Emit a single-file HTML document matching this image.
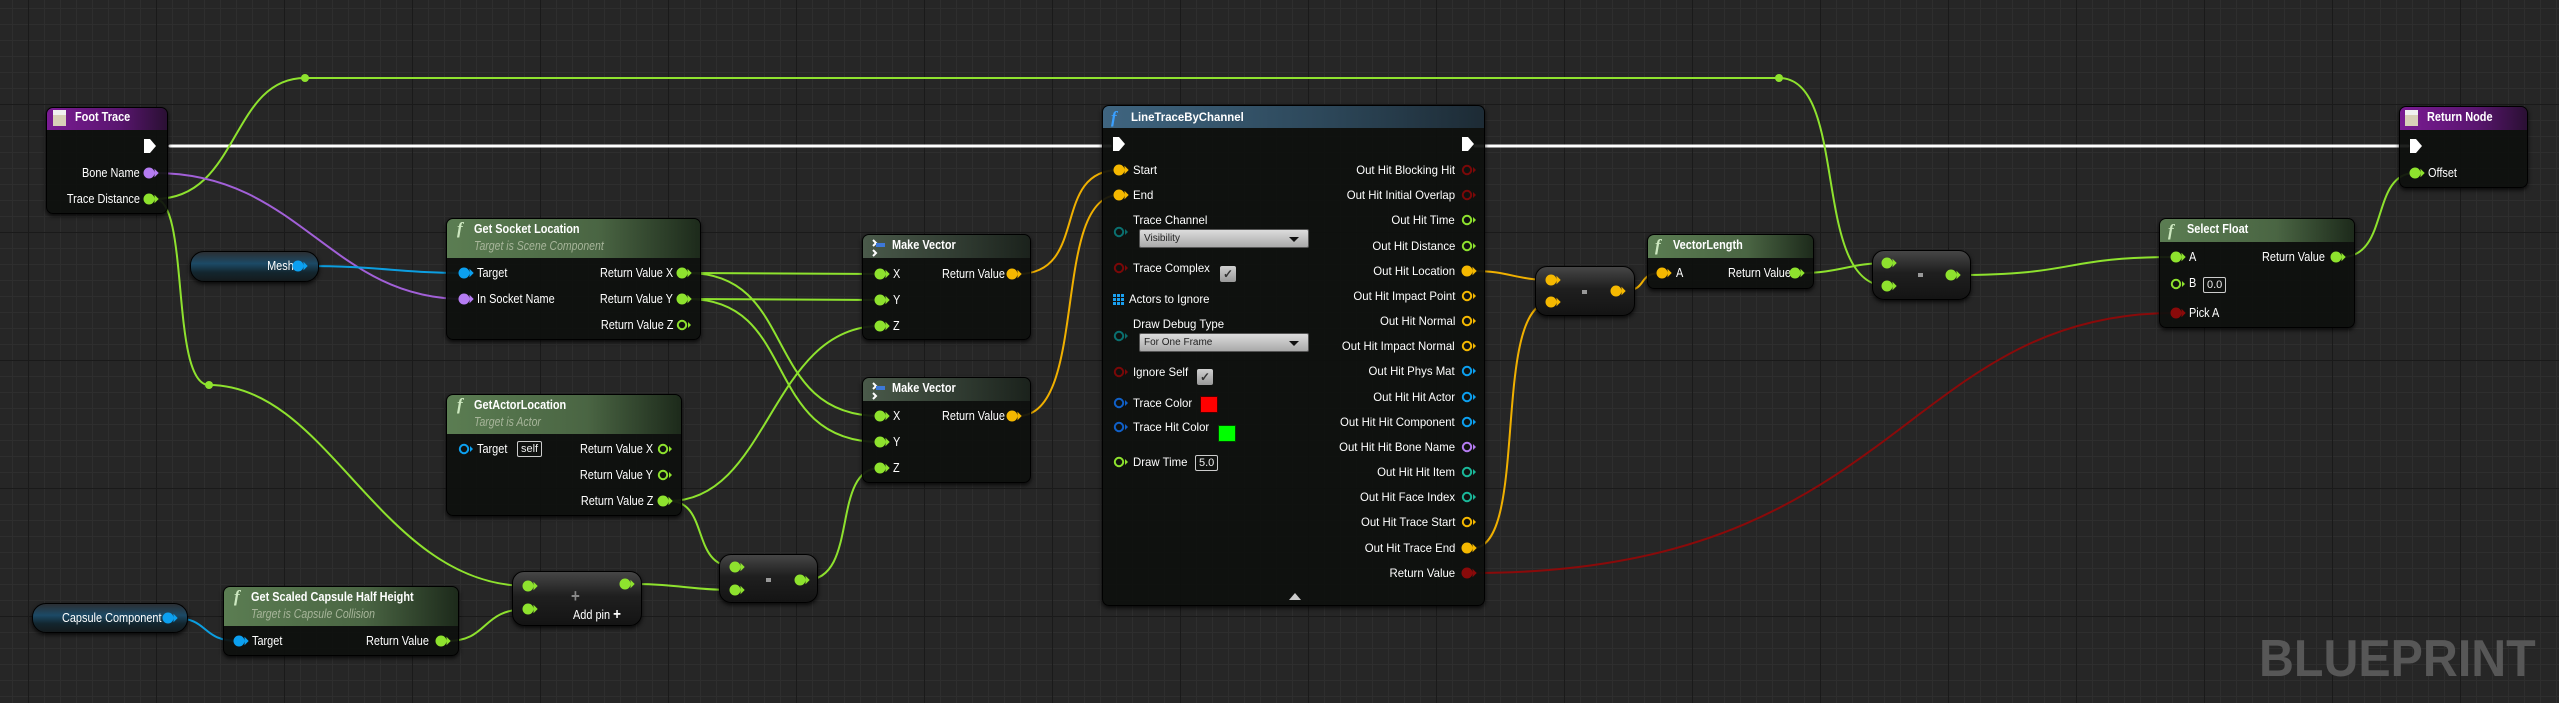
<!DOCTYPE html>
<html><head><meta charset="utf-8"><style>
*{margin:0;padding:0;box-sizing:border-box}
body{width:2559px;height:703px;overflow:hidden;position:relative;background-color:#262626;
background-image:
linear-gradient(to right,#1a1a1a 1px,transparent 1px),
linear-gradient(to bottom,#1a1a1a 1px,transparent 1px),
linear-gradient(to right,#2e2e2e 1px,transparent 1px),
linear-gradient(to bottom,#2e2e2e 1px,transparent 1px);
background-size:128px 128px,128px 128px,16px 16px,16px 16px;
background-position:28px 104px,28px 104px,12px 8px,12px 8px;
font-family:"Liberation Sans",sans-serif;color:#fff}
.n{position:absolute;background:rgba(14,16,14,.93);border:1px solid #000;border-radius:7px;box-shadow:0 2px 4px rgba(0,0,0,.8)}
.h{position:absolute;left:0;right:0;top:0;border-radius:6px 6px 0 0}
.hg{background:linear-gradient(to right,#5b7d52,#4a6543 60%,#1d2a1b)}
.hp{background:linear-gradient(to right,#7a1b93,#5a1570 60%,#2a1033)}
.hb{background:linear-gradient(to right,#3f6580,#2c4658 60%,#1d2b35)}
.hm{background:linear-gradient(to right,#4a5a4a,#2f3a30 60%,#1b221c)}
.c{position:absolute;border:1px solid #000;border-radius:12px;background:linear-gradient(#464646,#1f1f1f 45%,#141414);box-shadow:0 2px 4px rgba(0,0,0,.8)}
.v{position:absolute;border:1px solid #000;border-radius:14px;background:linear-gradient(to bottom,#2b2f33,#1c4a66 40%,#13262f 70%,#141a1c);box-shadow:0 2px 4px rgba(0,0,0,.8)}
.t{position:absolute;font-size:13px;line-height:16px;white-space:nowrap;color:#fff;transform:scaleX(.84);transform-origin:left center}
.r{text-align:right;transform-origin:right center}
.b{font-weight:bold}
.s{font-style:italic;color:#a7b59a;font-size:12.5px}
.lt{font-size:12px;transform:scaleX(.95)}
.combo{position:absolute;height:19px;background:linear-gradient(#dcdcdc,#a9a9a9);border:1px solid #555;border-radius:2px;color:#222;font-size:10px;line-height:17px;padding-left:4px}
.combo:after{content:"";position:absolute;right:9px;top:7px;border-left:5px solid transparent;border-right:5px solid transparent;border-top:5px solid #111}
.box{position:absolute;border:1px solid #ccc;border-radius:2px;font-size:11px;line-height:14px;padding:0 3px;color:#eee}
.chk{position:absolute;width:16px;height:16px;background:linear-gradient(#d0d0d0,#999);border-radius:2px;color:#333;font-size:12px;line-height:16px;text-align:center;font-weight:bold}
</style></head><body>

<svg style="position:absolute;left:0;top:0" width="2559" height="703" fill="none" stroke-linecap="round">
<g stroke="#fff" stroke-width="3">
<path d="M170 146 L1110 146"/><path d="M1475 146 L2408 146"/>
</g>
<g stroke="#8ee22e" stroke-width="2">
<path d="M155 199 C240 199 230 78 305 78 L1779 78 C1850 78 1810 286 1887 286"/>
<path d="M155 199 C190 199 170 385 209 385 C330 385 380 586 528 586"/>
<path d="M688 273 L880 274"/><path d="M688 299 L880 300"/>
<path d="M688 273 C800 273 760 416 880 416"/>
<path d="M688 299 C800 299 760 442 880 442"/>
<path d="M669 501 C770 501 770 326 880 326"/>
<path d="M669 501 C710 501 690 567 735 567"/>
<path d="M631 584 C680 584 690 590 735 590"/>
<path d="M447 641 C490 641 480 609 528 609"/>
<path d="M806 580 C860 580 830 468 880 468"/>
<path d="M1801 273 C1840 273 1850 263 1887 263"/>
<path d="M1957 275 C2080 275 2060 257 2176 257"/>
<path d="M2342 257 C2390 257 2370 173 2415 173"/>
</g>
<g stroke="#f0b000" stroke-width="2">
<path d="M1018 274 C1090 274 1050 170 1119 170"/>
<path d="M1018 416 C1090 416 1050 195 1119 195"/>
<path d="M1473 271 C1510 271 1515 280 1551 280"/>
<path d="M1473 548 C1530 548 1490 302 1551 302"/>
<path d="M1622 291 C1650 291 1635 273 1662 273"/>
</g>
<path d="M1473 573 C1900 573 1900 313 2176 313" stroke="#8a0a0a" stroke-width="2"/>
<path d="M155 173 C300 173 330 299 464 299" stroke="#a260d8" stroke-width="2"/>
<path d="M304 266 C380 266 400 273 464 273" stroke="#0c9ee0" stroke-width="2"/>
<path d="M174 618 C210 618 200 641 239 641" stroke="#0c9ee0" stroke-width="2"/>
<g fill="#8ee22e"><circle cx="305" cy="78" r="4"/><circle cx="1779" cy="78" r="4"/><circle cx="209" cy="385" r="4"/></g>
</svg>

<div class="n" style="left:46px;top:107px;width:122px;height:107px"><div class="h hp" style="height:22px"></div></div>
<div class="n" style="left:446px;top:218px;width:255px;height:122px"><div class="h hg" style="height:39px"></div></div>
<div class="v" style="left:190px;top:251px;width:129px;height:31px"></div>
<div class="n" style="left:862px;top:234px;width:169px;height:106px"><div class="h hm" style="height:23px"></div></div>
<div class="n" style="left:862px;top:377px;width:169px;height:106px"><div class="h hm" style="height:23px"></div></div>
<div class="n" style="left:446px;top:394px;width:236px;height:122px"><div class="h hg" style="height:39px"></div></div>
<div class="c" style="left:512px;top:571px;width:130px;height:55px"></div>
<div class="c" style="left:719px;top:554px;width:99px;height:49px"></div>
<div class="n" style="left:223px;top:586px;width:236px;height:70px"><div class="h hg" style="height:39px"></div></div>
<div class="v" style="left:32px;top:603px;width:156px;height:30px"></div>
<div class="n" style="left:1102px;top:105px;width:383px;height:501px"><div class="h hb" style="height:22px"></div></div>
<div class="c" style="left:1535px;top:266px;width:100px;height:50px"></div>
<div class="n" style="left:1647px;top:234px;width:167px;height:55px"><div class="h hg" style="height:23px"></div></div>
<div class="c" style="left:1872px;top:250px;width:99px;height:50px"></div>
<div class="n" style="left:2159px;top:218px;width:196px;height:110px"><div class="h hg" style="height:23px"></div></div>
<div class="n" style="left:2399px;top:106px;width:129px;height:82px"><div class="h hp" style="height:23px"></div></div>

<div class="t b" style="left:75px;top:109px">Foot Trace</div>
<div class="t r" style="right:2419px;top:165px">Bone Name</div>
<div class="t r" style="right:2419px;top:191px">Trace Distance</div>

<div class="t b" style="left:474px;top:221px">Get Socket Location</div>
<div class="t s" style="left:474px;top:238px">Target is Scene Component</div>
<div class="t" style="left:477px;top:265px">Target</div>
<div class="t" style="left:477px;top:291px">In Socket Name</div>
<div class="t r" style="right:1886px;top:265px">Return Value X</div>
<div class="t r" style="right:1886px;top:291px">Return Value Y</div>
<div class="t r" style="right:1886px;top:317px">Return Value Z</div>
<div class="t r" style="right:2265px;top:258px">Mesh</div>

<div class="t b" style="left:892px;top:237px">Make Vector</div>
<div class="t" style="left:893px;top:266px">X</div><div class="t" style="left:893px;top:292px">Y</div><div class="t" style="left:893px;top:318px">Z</div>
<div class="t r" style="right:1554px;top:266px">Return Value</div>
<div class="t b" style="left:892px;top:380px">Make Vector</div>
<div class="t" style="left:893px;top:408px">X</div><div class="t" style="left:893px;top:434px">Y</div><div class="t" style="left:893px;top:460px">Z</div>
<div class="t r" style="right:1554px;top:408px">Return Value</div>

<div class="t b" style="left:474px;top:397px">GetActorLocation</div>
<div class="t s" style="left:474px;top:414px">Target is Actor</div>
<div class="t" style="left:477px;top:441px">Target</div>
<div class="box" style="left:517px;top:441px">self</div>
<div class="t r" style="right:1906px;top:441px">Return Value X</div>
<div class="t r" style="right:1906px;top:467px">Return Value Y</div>
<div class="t r" style="right:1906px;top:493px">Return Value Z</div>

<div class="t" style="left:573px;top:607px">Add pin <b style="font-size:16px">+</b></div>
<div class="t" style="left:571px;top:588px;color:#888;font-size:18px;font-weight:bold">+</div>
<div style="position:absolute;left:766px;top:578px;width:5px;height:4px;background:#999"></div>

<div class="t b" style="left:251px;top:589px">Get Scaled Capsule Half Height</div>
<div class="t s" style="left:251px;top:606px">Target is Capsule Collision</div>
<div class="t" style="left:252px;top:633px">Target</div>
<div class="t r" style="right:2130px;top:633px">Return Value</div>
<div class="t r" style="right:2397px;top:610px">Capsule Component</div>

<div class="t b lt" style="left:1131px;top:109px">LineTraceByChannel</div>
<div class="t lt" style="left:1133px;top:162px">Start</div>
<div class="t lt" style="left:1133px;top:187px">End</div>
<div class="t lt" style="left:1133px;top:212px">Trace Channel</div>
<div class="combo" style="left:1139px;top:229px;width:170px">Visibility</div>
<div class="t lt" style="left:1133px;top:260px">Trace Complex</div>
<div class="chk" style="left:1220px;top:266px">✓</div>
<div class="t lt" style="left:1129px;top:291px">Actors to Ignore</div>
<div class="t lt" style="left:1133px;top:316px">Draw Debug Type</div>
<div class="combo" style="left:1139px;top:333px;width:170px">For One Frame</div>
<div class="t lt" style="left:1133px;top:364px">Ignore Self</div>
<div class="chk" style="left:1197px;top:369px">✓</div>
<div class="t lt" style="left:1133px;top:395px">Trace Color</div>
<div style="position:absolute;left:1200px;top:396px;width:18px;height:17px;background:#f00;border:1px solid #400"></div>
<div class="t lt" style="left:1133px;top:419px">Trace Hit Color</div>
<div style="position:absolute;left:1218px;top:425px;width:18px;height:17px;background:#0f0;border:1px solid #040"></div>
<div class="t lt" style="left:1133px;top:454px">Draw Time</div>
<div class="box" style="left:1195px;top:455px">5.0</div>
<div style="position:absolute;left:1289px;top:593px;border-left:6px solid transparent;border-right:6px solid transparent;border-bottom:7px solid #ccc"></div>
<div class="t r lt" style="right:1104px;top:162px">Out Hit Blocking Hit</div>
<div class="t r lt" style="right:1104px;top:187px">Out Hit Initial Overlap</div>
<div class="t r lt" style="right:1104px;top:212px">Out Hit Time</div>
<div class="t r lt" style="right:1104px;top:238px">Out Hit Distance</div>
<div class="t r lt" style="right:1104px;top:263px">Out Hit Location</div>
<div class="t r lt" style="right:1104px;top:288px">Out Hit Impact Point</div>
<div class="t r lt" style="right:1104px;top:313px">Out Hit Normal</div>
<div class="t r lt" style="right:1104px;top:338px">Out Hit Impact Normal</div>
<div class="t r lt" style="right:1104px;top:363px">Out Hit Phys Mat</div>
<div class="t r lt" style="right:1104px;top:389px">Out Hit Hit Actor</div>
<div class="t r lt" style="right:1104px;top:414px">Out Hit Hit Component</div>
<div class="t r lt" style="right:1104px;top:439px">Out Hit Hit Bone Name</div>
<div class="t r lt" style="right:1104px;top:464px">Out Hit Hit Item</div>
<div class="t r lt" style="right:1104px;top:489px">Out Hit Face Index</div>
<div class="t r lt" style="right:1104px;top:514px">Out Hit Trace Start</div>
<div class="t r lt" style="right:1104px;top:540px">Out Hit Trace End</div>
<div class="t r lt" style="right:1104px;top:565px">Return Value</div>

<div style="position:absolute;left:1582px;top:290px;width:5px;height:4px;background:#999"></div>
<div style="position:absolute;left:1918px;top:273px;width:5px;height:4px;background:#999"></div>
<div class="t b" style="left:1673px;top:237px">VectorLength</div>
<div class="t" style="left:1676px;top:265px">A</div>
<div class="t r" style="right:768px;top:265px">Return Value</div>

<div class="t b" style="left:2187px;top:221px">Select Float</div>
<div class="t" style="left:2189px;top:249px">A</div>
<div class="t" style="left:2189px;top:275px">B</div>
<div class="box" style="left:2203px;top:277px">0.0</div>
<div class="t" style="left:2189px;top:305px">Pick A</div>
<div class="t r" style="right:234px;top:249px">Return Value</div>

<div class="t b" style="left:2427px;top:109px">Return Node</div>
<div class="t" style="left:2428px;top:165px">Offset</div>

<div style="position:absolute;left:2259px;top:630px;font-weight:bold;font-size:52px;line-height:58px;color:#575757;white-space:nowrap;transform:scaleX(.93);transform-origin:left">BLUEPRINT</div>

<svg style="position:absolute;left:0;top:0" width="2559" height="703">
<defs>
<g id="pf"><circle r="5"/><path d="M6 -3 L9 0 L6 3Z"/></g>
<g id="ph"><circle r="4.2" fill="none" stroke-width="2"/><path d="M6 -3 L9 0 L6 3Z" stroke="none"/></g>
<path id="ex" d="M-6 -7 H0 L6 0 L0 7 H-6Z" fill="#fff"/>
<g id="fn"><text font-family="Liberation Serif,serif" font-style="italic" font-size="17" font-weight="bold" fill="#cde8c0">f</text></g>
</defs>
<use href="#ex" x="150" y="146"/><use href="#ex" x="1119" y="144"/><use href="#ex" x="1468" y="144"/><use href="#ex" x="2416" y="146"/>
<g fill="#b57cf2" stroke="#b57cf2"><use href="#pf" x="149" y="173"/><use href="#pf" x="464" y="299"/><use href="#ph" x="1467" y="447"/></g>
<g fill="#8ee22e" stroke="#8ee22e">
<use href="#pf" x="149" y="199"/><use href="#pf" x="682" y="273"/><use href="#pf" x="682" y="299"/><use href="#ph" x="682" y="325"/>
<use href="#pf" x="880" y="274"/><use href="#pf" x="880" y="300"/><use href="#pf" x="880" y="326"/>
<use href="#pf" x="880" y="416"/><use href="#pf" x="880" y="442"/><use href="#pf" x="880" y="468"/>
<use href="#ph" x="663" y="449"/><use href="#ph" x="663" y="475"/><use href="#pf" x="663" y="501"/>
<use href="#pf" x="528" y="586"/><use href="#pf" x="528" y="609"/><use href="#pf" x="625" y="584"/>
<use href="#pf" x="735" y="567"/><use href="#pf" x="735" y="590"/><use href="#pf" x="800" y="580"/>
<use href="#pf" x="441" y="641"/>
<use href="#ph" x="1467" y="220"/><use href="#ph" x="1467" y="246"/><use href="#ph" x="1119" y="462"/>
<use href="#pf" x="1795" y="273"/><use href="#pf" x="1887" y="263"/><use href="#pf" x="1887" y="286"/><use href="#pf" x="1951" y="275"/>
<use href="#pf" x="2176" y="257"/><use href="#ph" x="2176" y="284"/><use href="#pf" x="2336" y="257"/><use href="#pf" x="2415" y="173"/>
</g>
<g fill="#f5b800" stroke="#f5b800">
<use href="#pf" x="1012" y="274"/><use href="#pf" x="1012" y="416"/><use href="#pf" x="1119" y="170"/><use href="#pf" x="1119" y="195"/>
<use href="#pf" x="1467" y="271"/><use href="#ph" x="1467" y="296"/><use href="#ph" x="1467" y="321"/><use href="#ph" x="1467" y="346"/><use href="#ph" x="1467" y="522"/><use href="#pf" x="1467" y="548"/>
<use href="#pf" x="1551" y="280"/><use href="#pf" x="1551" y="302"/><use href="#pf" x="1616" y="291"/><use href="#pf" x="1662" y="273"/>
</g>
<g fill="#0ca0f0" stroke="#0ca0f0"><use href="#pf" x="298" y="266"/><use href="#pf" x="464" y="273"/><use href="#ph" x="464" y="449"/><use href="#pf" x="168" y="618"/><use href="#pf" x="239" y="641"/>
<use href="#ph" x="1467" y="371"/><use href="#ph" x="1467" y="397"/><use href="#ph" x="1467" y="422"/></g>
<g fill="#1060c8" stroke="#1060c8"><use href="#ph" x="1119" y="403"/><use href="#ph" x="1119" y="427"/></g>
<g fill="#0a6a6a" stroke="#0a7070"><use href="#ph" x="1119" y="232"/><use href="#ph" x="1119" y="336"/></g>
<g fill="#1ab89a" stroke="#1ab89a"><use href="#ph" x="1467" y="472"/><use href="#ph" x="1467" y="497"/></g>
<g fill="#7a0808" stroke="#7a0808"><use href="#ph" x="1119" y="268"/><use href="#ph" x="1119" y="372"/><use href="#ph" x="1467" y="170"/><use href="#ph" x="1467" y="195"/></g>
<g fill="#8a0a0a" stroke="#8a0a0a"><use href="#pf" x="1467" y="573"/><use href="#pf" x="2176" y="313"/></g>
<g fill="#1aa0f0"><rect x="1113" y="294" width="3" height="3"/><rect x="1117" y="294" width="3" height="3"/><rect x="1121" y="294" width="3" height="3"/><rect x="1113" y="298" width="3" height="3"/><rect x="1117" y="298" width="3" height="3"/><rect x="1121" y="298" width="3" height="3"/><rect x="1113" y="302" width="3" height="3"/><rect x="1117" y="302" width="3" height="3"/><rect x="1121" y="302" width="3" height="3"/></g>
<use href="#fn" x="457" y="234"/><use href="#fn" x="457" y="410"/><use href="#fn" x="234" y="602"/>
<use href="#fn" x="1655" y="251"/><use href="#fn" x="2168" y="236"/>
<text x="1111" y="123" font-family="Liberation Serif,serif" font-style="italic" font-size="17" font-weight="bold" fill="#3aa0ff">f</text>
<g><rect x="53" y="110" width="13" height="16" fill="#d8d0b8"/><rect x="53" y="110" width="13" height="5" fill="#f0f0f0"/>
<rect x="2405" y="110" width="13" height="16" fill="#d8d0b8"/><rect x="2405" y="110" width="13" height="5" fill="#f0f0f0"/></g>
<g stroke="#fff" stroke-width="2" fill="none"><path d="M873 240 l3 3 l-3 3 M873 250 l3 3 l-3 3"/><path d="M873 383 l3 3 l-3 3 M873 393 l3 3 l-3 3"/></g>
<rect x="876" y="243" width="9" height="4" fill="#3d78d8"/><rect x="876" y="386" width="9" height="4" fill="#3d78d8"/>
</svg>
</body></html>
